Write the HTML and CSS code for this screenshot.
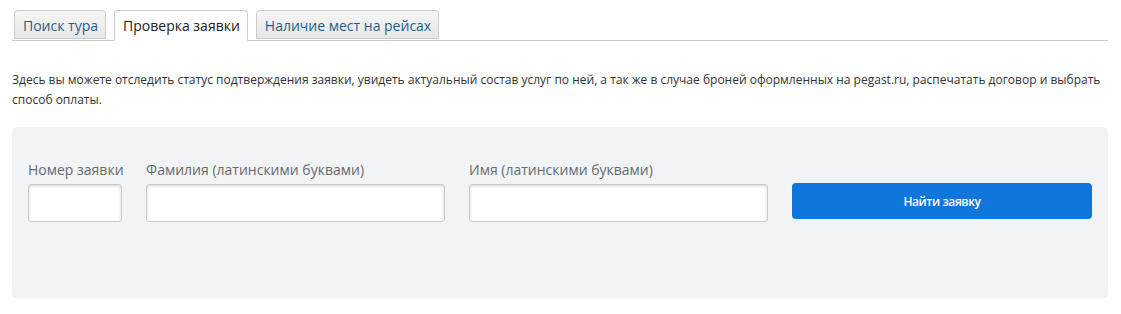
FILE: index.html
```html
<!DOCTYPE html>
<html lang="ru">
<head>
    <meta charset="UTF-8">
    <meta name="viewport" content="width=device-width, initial-scale=1.0">
    <title>Проверка заявки</title>
    <link rel="stylesheet" href="styles.css">
</head>
<body>
    <div class="page">
        <ul class="tabs">
            <li class="tab">Поиск тура</li>
            <li class="tab tab-active">Проверка заявки</li>
            <li class="tab">Наличие мест на рейсах</li>
        </ul>

        <p class="intro">Здесь вы можете отследить статус подтверждения заявки, увидеть актуальный состав услуг по ней, а так же в случае броней оформленных на pegast.ru, распечатать договор и выбрать способ оплаты.</p>

        <form class="check-form">
            <div class="field">
                <label class="field-label">Номер заявки</label>
                <input class="field-input" type="text">
            </div>
            <div class="field">
                <label class="field-label">Фамилия (латинскими буквами)</label>
                <input class="field-input" type="text">
            </div>
            <div class="field">
                <label class="field-label">Имя (латинскими буквами)</label>
                <input class="field-input" type="text">
            </div>
            <div class="field field-action">
                <button class="find-btn" type="button">Найти заявку</button>
            </div>
        </form>
    </div>
</body>
</html>
```

FILE: styles.css
```css
body, html {
    margin: 0;
    padding: 0;
    background: #fff;
    font-family: 'Open Sans', 'Noto Sans', sans-serif;
    color: #333;
}
.page {
    padding: 10px 13px 0 12px;
}
.tabs {
    display: flex;
    gap: 8px;
    margin: 0;
    padding: 0 0 0 2px;
    list-style: none;
    border-bottom: 1px solid #ccc;
}
.tab {
    height: 29px;
    padding: 0 7px 0 8px;
    margin-bottom: -1px;
    box-sizing: border-box;
    line-height: 29px;
    font-size: 14px;
    color: #1f5f8c;
    background: linear-gradient(#f6f6f6, #e6e6e6);
    border: 1px solid #ccc;
    border-radius: 4px 4px 0 0;
    cursor: pointer;
    white-space: nowrap;
}
.tab-active {
    height: 31px;
    color: #222;
    background: #fff;
    border-bottom-color: #fff;
}
.intro {
    margin: 29px 0 0;
    font-size: 12px;
    line-height: 20px;
    color: #333;
}
.check-form {
    display: grid;
    grid-template-columns: 94px 299px 299px 1fr;
    gap: 24px;
    margin-top: 17px;
    padding: 33px 16px 76px;
    background: #f2f3f5;
    border-radius: 5px;
}
.field {
    display: flex;
    flex-direction: column;
}
.field-label {
    font-size: 14px;
    line-height: 20px;
    margin-bottom: 4px;
    color: #6a6a6a;
    white-space: nowrap;
}
.field-input {
    height: 38px;
    box-sizing: border-box;
    border: 1px solid #ccc;
    border-radius: 3px;
    background: #fff;
    box-shadow: inset 0 1px 3px rgba(0, 0, 0, 0.18);
    font-family: inherit;
    font-size: 14px;
    padding: 0 8px;
}
.field-action {
    justify-content: flex-end;
    padding-bottom: 3px;
}
.find-btn {
    height: 36px;
    border: 0;
    border-radius: 4px;
    background: #0f76db;
    color: #fff;
    font-family: 'Open Sans', sans-serif;
    font-size: 12px;
    font-weight: 600;
    letter-spacing: -0.4px;
    cursor: pointer;
}
```
